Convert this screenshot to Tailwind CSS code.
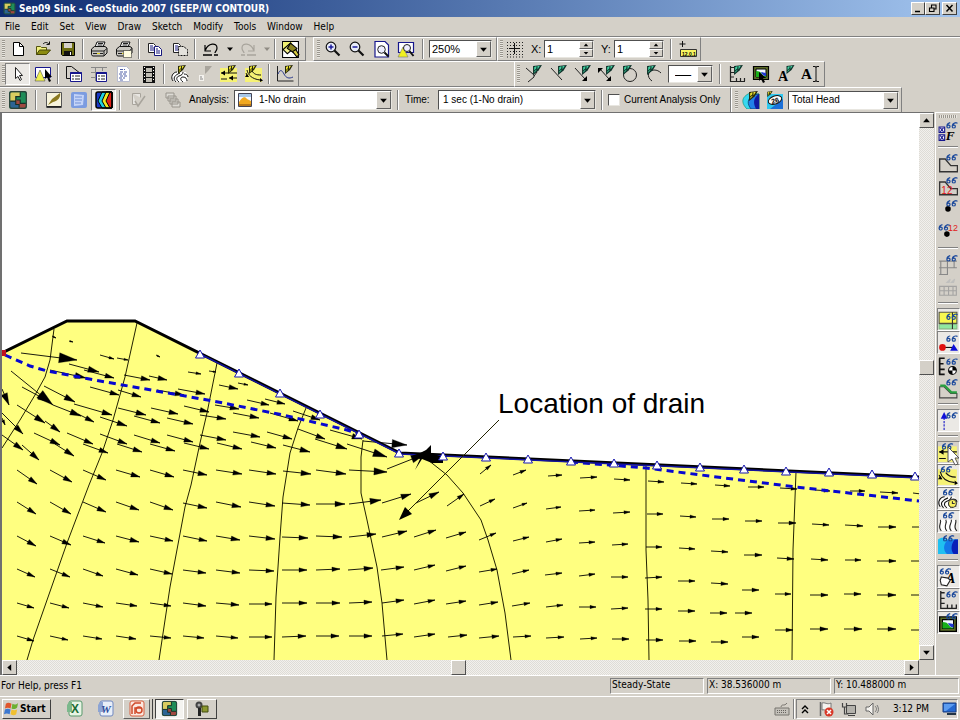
<!DOCTYPE html>
<html lang="en">
<head>
  <meta charset="UTF-8" />
  <meta name="viewport" content="width=device-width, initial-scale=1" />
  <title>Sep09 Sink - GeoStudio 2007 (SEEP/W CONTOUR)</title>
  <script src="https://cdn.jsdelivr.net/npm/@tailwindcss/browser@4"></script>
</head>
<body class="bg-[#d4d0c8] h-screen flex flex-col overflow-hidden text-black text-[10px] leading-3 font-['DejaVu_Sans_Condensed','DejaVu_Sans',sans-serif]">

  <!-- shared icons, 18x18 grid -->
  <svg class="hidden">
    <defs>
      <symbol id="logo" viewBox="0 0 18 18">
        <rect x="1" y="1" width="16" height="16" rx="2" fill="#1e6c50" />
        <path d="M2 2h9v4H7v4H2z" fill="#d8cc60" />
        <path d="M11 2h5v10h-5V9H8V6h3z" fill="#1e8c58" />
        <path d="M2 10h5v3h3v3H2z" fill="#2c6494" />
        <path d="M7 9h4v3h5v4h-6v-3H7z" fill="#a04840" />
        <path d="M11 2v4H7v4H2M8 9h3v3h5M7 10v3h3v3" fill="none" stroke="#163028" />
        <rect x="1.500" y="1.500" width="15" height="15" rx="2" fill="none" stroke="#2a4038" />
      </symbol>
      <symbol id="pen" viewBox="0 0 8 9">
        <path d="M0 1L8 0 5 5 0 9z" fill="#0c3028" />
        <path d="M1 2l2-1v2L1 5zM4 1h2L4 4zM1 6l2-2v1L1 7z" fill="#40d0a0" />
      </symbol>
      <symbol id="ypen" viewBox="0 0 8 9">
        <path d="M0 1L8 0 5 5 0 9z" fill="#282808" />
        <path d="M1 2l2-1v2L1 5zM4 1h2L4 4zM1 6l2-2v1L1 7z" fill="#e8e030" />
      </symbol>
      <symbol id="glasses" viewBox="0 0 11 6">
        <path d="M4 .5C2 1 1 2.500 1 4a1.300 1.300 0 0 0 2.800 0c0-1.500-2-1.600-2.600-.3M9 .5C7 1 5.800 2.500 5.800 4a1.300 1.300 0 0 0 2.800 0c0-1.500-2-1.600-2.600-.3M9 .6l1.600.5" fill="none" stroke="#1c4a9c" stroke-width="1.100" />
      </symbol>
      <symbol id="new" viewBox="0 0 18 18"><path d="M4.500 2.500h6l4 4v9h-10z" fill="#fff" stroke="#000" /><path d="M10.500 2.500v4h4" fill="none" stroke="#000" /></symbol>
      <symbol id="open" viewBox="0 0 18 18">
        <path d="M2.500 14.500v-8h4l1 1h5v3" fill="#f0f080" stroke="#555510" />
        <path d="M2.500 14.500l3-4.500h11l-4 4.500z" fill="#8c8c10" stroke="#444408" />
        <path d="M9 4c2-2 4-2 6 0M15.500 1.500v3h-3" fill="none" stroke="#111" />
      </symbol>
      <symbol id="save" viewBox="0 0 18 18">
        <path d="M2.500 2.500h13v13h-12l-1-1z" fill="#6c6c10" stroke="#000" />
        <path d="M5 3h8v5H5z" fill="#d4d0c8" /><path d="M5 11h8v4H5z" fill="#111" /><path d="M11 12h1v3h-1z" fill="#fff" />
      </symbol>
      <symbol id="print" viewBox="0 0 18 18">
        <path d="M5 7l2-5h8l-2 5z" fill="#fff" stroke="#111" />
        <path d="M1.500 9l3-2.500H15l2 1.500v5l-3 3H2.500l-1-1.500z" fill="#c8c6c0" stroke="#111" />
        <path d="M2 11h12l3-2.500M3 13.500h10M14 11v5M8 3.500h5M7.500 5h5" fill="none" stroke="#222" />
        <path d="M7 13h3v1H7z" fill="#e0d020" />
      </symbol>
      <symbol id="copy" viewBox="0 0 18 18">
        <path d="M2.500 3.500h5l2 2v7h-7z" fill="#fff" stroke="#222" />
        <path d="M8.500 6.500h4l3 3v6h-7z" fill="#fff" stroke="#16167c" />
        <path d="M4 6h3M4 8h4M4 10h4M10 9h2M10 11h4M10 13h4" stroke="#16167c" />
      </symbol>
      <symbol id="copydash" viewBox="0 0 18 18">
        <path d="M2.500 3.500h5l2 2v7h-7z" fill="#fff" stroke="#222" />
        <path d="M4 6h3M4 8h4M4 10h4" stroke="#16167c" />
        <path d="M7.500 6.500h5l4 3v6h-9z" fill="#e4e2dc" stroke="#111" stroke-dasharray="2 1" />
      </symbol>
      <symbol id="undo" viewBox="0 0 18 18"><path d="M3 5v6h6M3.500 10C6 3 15 2 15 8c0 3-2 3.500-2 5" fill="none" stroke="currentColor" stroke-width="1.200" /><path d="M1 15h9M12 15h4" stroke="currentColor" stroke-width="1.500" /></symbol>
      <symbol id="brush" viewBox="0 0 18 18">
        <path d="M1.500 1.500h15v15h-15z" fill="#fff" stroke="#000" />
        <path d="M2 2h9L2 11z" fill="#f0f070" />
        <path d="M2 9l7-6 3 5-6 5z" fill="#f4f090" stroke="#000" />
        <path d="M9 3l6 5-3 4-6-4z" fill="#8c8420" stroke="#000" />
        <path d="M11 11l3-2 3 5-2 2z" fill="#d8cc40" stroke="#000" />
      </symbol>
      <symbol id="mag" viewBox="0 0 18 18"><circle cx="7" cy="7" r="4.800" fill="#e8ecf8" stroke="#111" stroke-width="1.200" /><path d="M10.500 10.500l5 5" stroke="#111" stroke-width="2.200" /></symbol>
      <symbol id="pagemag" viewBox="0 0 18 18"><path d="M2 1.500h10l3.500 3.500v12H2z" fill="#fff" stroke="#16168c" stroke-width="1.200" /><circle cx="8.500" cy="9.500" r="3.800" fill="#eef" stroke="#222" /><path d="M11.500 12.500l4 4" stroke="#111" stroke-width="2" /></symbol>
      <symbol id="objmag" viewBox="0 0 18 18"><path d="M1.500 2.500h15v10h-15z" fill="#fff" stroke="#16168c" stroke-width="1.200" /><path d="M1 17l5-10 5 10z" fill="#f0f020" stroke="#777" stroke-width=".6" /><circle cx="10" cy="8" r="3.500" fill="#eef" stroke="#222" /><path d="M12.500 11l4 5" stroke="#111" stroke-width="2" /></symbol>
      <symbol id="gridpts" viewBox="0 0 18 18"><path d="M1 2.500h16M1 5.500h16M1 8.500h16M1 11.500h16M1 14.500h16M1 17h16" stroke="#222" stroke-dasharray="1 2" /><path d="M8.500 3v11M3 8.500h11" stroke="#111" /></symbol>
      <symbol id="coords" viewBox="0 0 18 18"><path d="M3.500 1v6M.5 4h6" stroke="#111" /><path d="M1.500 9.500h16v7h-16z" fill="#f8f460" stroke="#333" /><text x="3" y="15.500" font-size="5" font-weight="bold" font-family="Liberation Sans">12,0,1</text></symbol>
      <symbol id="pointer" viewBox="0 0 18 18"><path d="M6.500 2.500v11l2.500-2 2 4 1.500-1-2-4h3z" fill="#fff" stroke="#222" /></symbol>
      <symbol id="selobj" viewBox="0 0 18 18"><path d="M1.500 2.500h15v10h-15z" fill="#fff" stroke="#16168c" /><path d="M1 16l5-11 5 11z" fill="#f0f050" stroke="#555" stroke-width=".6" /><path d="M11 4v10l2-2 2 5 2-1-2-4h3z" fill="#000" /></symbol>
      <symbol id="regionprops" viewBox="0 0 18 18"><path d="M1.500 13.500v-12l5 0 9 7M1.500 13.500h5" fill="none" stroke="#111" /><path d="M5.500 7.500h11v9h-11z" fill="#fff" stroke="#16168c" /><path d="M5.500 8h11" stroke="#16168c" stroke-width="2" /><path d="M7 11h2M10 11h5M7 14h2M10 14h5" stroke="#222" /></symbol>
      <symbol id="meshprops" viewBox="0 0 18 18"><path d="M1 2.500h16M1 7.500h5M1 12.500h4M5.500 2v14M12.500 2v4" fill="none" stroke="#888" /><path d="M6.500 7.500h10v9h-10z" fill="#fff" stroke="#16168c" /><path d="M6.500 8h10" stroke="#16168c" stroke-width="2" /><path d="M8 11h2M11 11h4M8 14h2M11 14h4" stroke="#222" /></symbol>
      <symbol id="report" viewBox="0 0 18 18"><path d="M2.500 1.500h9l3 3v12h-12z" fill="#fff" stroke="#b8bcd0" /><path d="M5 4.500h5M5 7h7M4 9h7M5 11h7M4 13h6M5 15h4" stroke="#5060a8" stroke-dasharray="3 1" /></symbol>
      <symbol id="film" viewBox="0 0 18 18"><path d="M3 1h12v17H3z" fill="#111" /><path d="M6 3h6v4H6zM6 8h6v4H6zM6 13h6v4H6z" fill="#c0bdb4" /><path d="M4.500 2v15M13.500 2v15" stroke="#fff" stroke-dasharray="1 2" /></symbol>
      <symbol id="contours" viewBox="0 0 18 18"><path d="M2 15C-1 11 2 8 6 7l9 0 2 8-3 2H4z" fill="#fff" /><path d="M2 16C-1 12 2 7 6 7M5 17c-4-4-1-7 4-9M8 17c-3-2-3-5 0-6s4-2 4-4M12 17c-3-2-3-5 0-5s4 2 4 4M13 9c2 0 4 1 4 3" fill="none" stroke="#111" /></symbol>
      <symbol id="vectors" viewBox="0 0 18 18"><path d="M0 3h17v14H0z" fill="#f6f274" /><path d="M1 8h16M9 13h8M1 14h6" stroke="#111" /><path d="M1 8l4-2.500v5zM9 13l4-2.500v5z" fill="#000" /></symbol>
      <symbol id="paths" viewBox="0 0 18 18"><path d="M0 3h17v14H0z" fill="#f6f274" /><path d="M2 5c1 5 5 9 13 10M7 6c2 3 4 4 9 4M1 8l2 4" fill="none" stroke="#111" /><path d="M15 17v-4l3 2.500zM2 9l-2 3h4z" fill="#000" /></symbol>
      <symbol id="graph" viewBox="0 0 18 18"><path d="M1.500 1v15h16" fill="none" stroke="#222" /><path d="M2 9c2-5 4-4 6 0s5 5 9 3" fill="none" stroke="#28388c" /></symbol>
      <symbol id="ruler" viewBox="0 0 18 18"><path d="M2.500 1v15.500H17M2 2.500h4M2 7.500h4M2 12h4M8.500 16v-3M12.500 16v-3M16.500 16v-3" fill="none" stroke="#222" stroke-width="1.200" /></symbol>
      <symbol id="picture" viewBox="0 0 18 18"><path d="M1.500 1.500h15v13h-15z" fill="#5c6c28" stroke="#000" stroke-width="1.200" /><path d="M4 4h10v8H4z" fill="#f4f8ff" stroke="#000" /><path d="M4 6c3 0 5 1 6 3s2 2 4 2v1H4z" fill="#18b018" /><path d="M9 7l5 1v3c-2 0-4-1-5-4z" fill="#2038d0" /></symbol>
      <symbol id="mesh" viewBox="0 0 18 18"><path d="M1 4.500h16M1 10.500h16M1 16.500h8M2.500 4v13M8.500 4v13M14.500 4v7" stroke="currentColor" fill="none" /></symbol>
      <symbol id="region" viewBox="0 0 18 18"><path d="M1.500 4.500h5l5 6h6v5.500h-16z" fill="none" stroke="#333" stroke-width="1.200" /></symbol>
      <symbol id="contshade" viewBox="0 0 18 18"><path d="M0 4c3-2 5-2 7 0h11v13H0z" fill="#20c0f0" /><path d="M8 17c-4-4-3-9 1-13h9v13z" fill="#1478e8" /><path d="M14 17c-3-4-2-9 1-13h3v13z" fill="#0820b8" /></symbol>
      <symbol id="tri" viewBox="0 0 8 8"><path d="M1 2.500h6L4 6z" fill="currentColor" /></symbol>
    </defs>
  </svg>

  <header class="h-[17px] shrink-0 flex items-center gap-[3px] px-[3px] bg-linear-to-r from-[#0f2b70] to-[#a2c4ee] text-white font-bold">
    <svg class="size-[13px]"><use href="#logo" /></svg>
    <h1 class="grow">Sep09 Sink - GeoStudio 2007 (SEEP/W CONTOUR)</h1>
    <div class="flex text-black">
      <button aria-label="Minimize" class="w-[14px] h-[13px] bg-[#d4d0c8] border border-t-white border-l-white border-b-[#404040] border-r-[#404040]"><svg viewBox="0 0 12 11"><path d="M3 8.500h5" stroke="#000" stroke-width="1.500" /></svg></button>
      <button aria-label="Restore" class="w-[15px] h-[13px] bg-[#d4d0c8] border border-t-white border-l-white border-b-[#404040] border-r-[#404040]"><svg viewBox="0 0 13 11"><path d="M5.500 5V2h4.500v4H8M3.500 5h4.500v3.500H3.500zM5 2h5M3 5h5" fill="none" stroke="#000" stroke-width="1.100" /></svg></button>
      <button aria-label="Close" class="ml-[2px] w-[15px] h-[13px] bg-[#d4d0c8] border border-t-white border-l-white border-b-[#404040] border-r-[#404040]"><svg viewBox="0 0 13 11"><path d="M3.500 2l6 6.500M9.500 2l-6 6.500" stroke="#000" stroke-width="1.500" /></svg></button>
    </div>
  </header>

  <nav class="h-[19px] shrink-0 flex items-center gap-[11px] px-[5px]">
    <button>File</button><button>Edit</button><button>Set</button><button>View</button><button>Draw</button><button>Sketch</button><button>Modify</button><button>Tools</button><button>Window</button><button>Help</button>
  </nav>

  <!-- standard, zoom and grid bars -->
  <div class="h-[25px] shrink-0 flex items-stretch border-t border-[#808080] font-['Liberation_Sans',sans-serif]">
    <div class="flex items-center w-[306px] pl-[2px] border-t border-t-white border-r border-r-[#808080] border-b border-b-[#808080] *:shrink-0">
      <span class="w-[3px] h-[18px] bg-[repeating-linear-gradient(#9a968e_0_1px,#e8e6e0_1px_2px)]"></span>
      <button aria-label="New" class="w-[25px] flex justify-center"><svg class="size-[18px]"><use href="#new" /></svg></button>
      <button aria-label="Open" class="w-[25px] flex justify-center"><svg class="size-[18px]"><use href="#open" /></svg></button>
      <button aria-label="Save" class="w-[25px] flex justify-center"><svg class="size-[18px]"><use href="#save" /></svg></button>
      <span class="w-[2px] h-5 mx-[2px] border-l border-[#808080] bg-white"></span>
      <button aria-label="Print" class="w-[25px] flex justify-center"><svg class="size-[18px]"><use href="#print" /></svg></button>
      <button aria-label="Print selection" class="w-[25px] flex justify-center"><svg class="size-[18px]" viewBox="0 0 18 18"><use href="#print" width="18" height="18" /><path d="M8.500 10.500h8v7h-8z" fill="#fffde0" stroke="#222" stroke-dasharray="1 1" /></svg></button>
      <span class="w-[2px] h-5 mx-[2px] border-l border-[#808080] bg-white"></span>
      <button aria-label="Copy" class="w-[25px] flex justify-center"><svg class="size-[18px]"><use href="#copy" /></svg></button>
      <button aria-label="Copy selection" class="w-[25px] flex justify-center"><svg class="size-[18px]"><use href="#copydash" /></svg></button>
      <span class="w-[2px] h-5 mx-[2px] border-l border-[#808080] bg-white"></span>
      <button aria-label="Undo" class="w-[26px] flex justify-center"><svg class="size-[18px]"><use href="#undo" /></svg></button>
      <button aria-label="Undo list" class="w-[11px] flex justify-center"><svg class="size-[8px]"><use href="#tri" /></svg></button>
      <button aria-label="Redo" disabled class="w-[26px] flex justify-center text-[#a8a49c] -scale-x-100"><svg class="size-[18px]"><use href="#undo" /></svg></button>
      <button aria-label="Redo list" disabled class="w-[11px] flex justify-center text-[#908c84]"><svg class="size-[8px]"><use href="#tri" /></svg></button>
      <span class="w-[2px] h-5 mx-[2px] border-l border-[#808080] bg-white"></span>
      <button aria-label="Format painter" class="w-[25px] flex justify-center"><svg class="size-[19px]"><use href="#brush" /></svg></button>
    </div>
    <div class="flex items-center ml-[7px] w-[184px] pl-[3px] border-t border-l border-white border-r border-r-[#808080] border-b border-b-[#808080] *:shrink-0">
      <span class="w-[3px] h-[18px] bg-[repeating-linear-gradient(#9a968e_0_1px,#e8e6e0_1px_2px)]"></span>
      <button aria-label="Zoom in" class="w-[25px] flex justify-center"><svg class="size-[18px]" viewBox="0 0 18 18"><use href="#mag" width="18" height="18" /><path d="M4.500 7h5M7 4.500v5" stroke="#1c1c9c" stroke-width="1.500" /></svg></button>
      <button aria-label="Zoom out" class="w-6 flex justify-center"><svg class="size-[18px]" viewBox="0 0 18 18"><use href="#mag" width="18" height="18" /><path d="M4.500 7h5" stroke="#1c1c9c" stroke-width="1.500" /></svg></button>
      <button aria-label="Zoom page" class="w-[25px] flex justify-center"><svg class="size-[18px]"><use href="#pagemag" /></svg></button>
      <button aria-label="Zoom objects" class="w-6 flex justify-center"><svg class="size-[18px]"><use href="#objmag" /></svg></button>
      <span class="w-[2px] h-5 mx-[4px] border-l border-[#808080] bg-white"></span>
      <div class="relative w-[63px] h-[18px] ml-px bg-white border border-t-[#505050] border-l-[#505050] border-[#e8e6e0]">
        <select aria-label="Zoom" class="appearance-none size-full pl-[2px] text-[11px] leading-4"><option>250%</option></select>
        <span class="absolute right-0 inset-y-0 w-[15px] bg-[#d4d0c8] border border-t-white border-l-white border-[#606060] flex items-center justify-center pointer-events-none"><svg class="size-[9px]"><use href="#tri" /></svg></span>
      </div>
    </div>
    <div class="flex items-center w-[204px] pl-[2px] border-t border-l border-white border-r border-r-[#808080] border-b border-b-[#808080] *:shrink-0">
      <span class="w-[3px] h-[18px] bg-[repeating-linear-gradient(#9a968e_0_1px,#e8e6e0_1px_2px)]"></span>
      <button aria-label="Grid" class="w-6 flex justify-center"><svg class="size-[18px]"><use href="#gridpts" /></svg></button>
      <label for="gridX" class="w-[17px] pl-[4px] text-[11px]">X:</label>
      <div class="flex w-[50px] h-[18px] bg-white border border-t-[#505050] border-l-[#505050] border-[#e8e6e0]">
        <input id="gridX" value="1" class="w-[34px] pl-[2px] text-[11px]" />
        <span class="w-[14px] flex flex-col">
          <button aria-label="X up" class="flex-1 bg-[#d4d0c8] border border-t-white border-l-white border-[#606060] flex items-center justify-center"><svg class="size-[6px] rotate-180"><use href="#tri" /></svg></button>
          <button aria-label="X down" class="flex-1 bg-[#d4d0c8] border border-t-white border-l-white border-[#606060] flex items-center justify-center"><svg class="size-[6px]"><use href="#tri" /></svg></button>
        </span>
      </div>
      <label for="gridY" class="w-[20px] pl-[7px] text-[11px]">Y:</label>
      <div class="flex w-[50px] h-[18px] bg-white border border-t-[#505050] border-l-[#505050] border-[#e8e6e0]">
        <input id="gridY" value="1" class="w-[34px] pl-[2px] text-[11px]" />
        <span class="w-[14px] flex flex-col">
          <button aria-label="Y up" class="flex-1 bg-[#d4d0c8] border border-t-white border-l-white border-[#606060] flex items-center justify-center"><svg class="size-[6px] rotate-180"><use href="#tri" /></svg></button>
          <button aria-label="Y down" class="flex-1 bg-[#d4d0c8] border border-t-white border-l-white border-[#606060] flex items-center justify-center"><svg class="size-[6px]"><use href="#tri" /></svg></button>
        </span>
      </div>
      <span class="w-[2px] h-5 ml-[6px] mr-[4px] border-l border-[#808080] bg-white"></span>
      <button aria-label="Coordinates" class="w-6 flex justify-center"><svg class="size-[18px]"><use href="#coords" /></svg></button>
    </div>
    <div class="grow border-t border-white"></div>
  </div>

  <!-- mode and sketch bars -->
  <div class="h-[26px] shrink-0 flex items-stretch">
    <div class="flex items-center w-[299px] pl-[2px] border-t border-t-white border-r border-r-[#808080] border-b border-b-[#808080] *:shrink-0">
      <span class="w-[3px] h-[18px] bg-[repeating-linear-gradient(#9a968e_0_1px,#e8e6e0_1px_2px)]"></span>
      <button aria-label="Select" class="w-[25px] h-[22px] flex items-center justify-center bg-[#ebe9e5] border border-t-[#808080] border-l-[#808080] border-white"><svg class="size-[18px]"><use href="#pointer" /></svg></button>
      <button aria-label="Select objects" class="w-[25px] flex justify-center"><svg class="size-[18px]"><use href="#selobj" /></svg></button>
      <span class="w-[2px] h-5 mx-[2px] border-l border-[#808080] bg-white"></span>
      <button aria-label="Region properties" class="w-[25px] flex justify-center"><svg class="size-[18px]"><use href="#regionprops" /></svg></button>
      <button aria-label="Mesh properties" class="w-[25px] flex justify-center"><svg class="size-[18px]"><use href="#meshprops" /></svg></button>
      <button aria-label="Report" class="w-[25px] flex justify-center"><svg class="size-[18px]"><use href="#report" /></svg></button>
      <button aria-label="Movie" class="w-[25px] flex justify-center"><svg class="size-[18px]"><use href="#film" /></svg></button>
      <span class="w-[2px] h-5 mx-[2px] border-l border-[#808080] bg-white"></span>
      <button aria-label="Draw contours" class="w-[25px] flex justify-center"><svg class="size-[18px]" viewBox="0 0 18 18"><use href="#contours" width="18" height="18" /><use href="#ypen" x="7" width="8" height="9" /></svg></button>
      <button aria-label="Draw contour labels" disabled class="w-[25px] flex justify-center"><svg class="size-[18px]" viewBox="0 0 18 18"><path d="M9 1h7l-4 5-3 3z" fill="#a8a49c" /><path d="M3 10h5v6H3z" fill="#f4f2ee" /><path d="M4 12h2M4 14h3" stroke="#888" /></svg></button>
      <button aria-label="Draw vectors" class="w-6 flex justify-center"><svg class="size-[18px]" viewBox="0 0 18 18"><use href="#vectors" width="18" height="18" /><use href="#ypen" x="8" width="8" height="9" /></svg></button>
      <button aria-label="Draw flow paths" class="w-[25px] flex justify-center"><svg class="size-[18px]" viewBox="0 0 18 18"><use href="#paths" width="18" height="18" /><use href="#ypen" x="4" width="8" height="9" /></svg></button>
      <span class="w-[2px] h-5 mx-[2px] border-l border-[#808080] bg-white"></span>
      <button aria-label="Draw graph" class="w-[25px] flex justify-center"><svg class="size-[18px]" viewBox="0 0 18 18"><use href="#graph" width="18" height="18" /><use href="#ypen" x="9" width="8" height="9" /></svg></button>
    </div>
    <div class="w-[215px] border-t border-white border-b border-b-[#808080]"></div>
    <div class="flex items-center w-[311px] pl-[2px] border-t border-l border-white border-r border-r-[#808080] border-b border-b-[#808080] *:shrink-0">
      <span class="w-[3px] h-[18px] bg-[repeating-linear-gradient(#9a968e_0_1px,#e8e6e0_1px_2px)]"></span>
      <button aria-label="Sketch lines" class="w-6 ml-[2px] flex justify-center"><svg class="size-[18px]" viewBox="0 0 18 18"><path d="M1 3l8 7v2l-6 5M9 11l3-4" fill="none" stroke="#222" /><use href="#pen" x="8" width="9" height="10" /></svg></button>
      <button aria-label="Sketch line" class="w-6 flex justify-center"><svg class="size-[18px]" viewBox="0 0 18 18"><path d="M2 3l11 12" stroke="#222" /><use href="#pen" x="9" width="9" height="10" /></svg></button>
      <button aria-label="Sketch arrow" class="w-6 flex justify-center"><svg class="size-[18px]" viewBox="0 0 18 18"><path d="M2 3l10 11" stroke="#222" /><path d="M14 11v5H9z" fill="#000" /><use href="#pen" x="9" width="9" height="10" /></svg></button>
      <button aria-label="Sketch double arrow" class="w-6 flex justify-center"><svg class="size-[18px]" viewBox="0 0 18 18"><path d="M3 4l9 10" stroke="#222" /><path d="M14 11v5H9zM1 3h5L1 8z" fill="#000" /><use href="#pen" x="9" width="9" height="10" /></svg></button>
      <button aria-label="Sketch circle" class="w-6 flex justify-center"><svg class="size-[18px]" viewBox="0 0 18 18"><circle cx="9" cy="10" r="6.500" fill="none" stroke="#222" /><use href="#pen" x="2" width="9" height="10" /></svg></button>
      <button aria-label="Sketch arc" class="w-6 flex justify-center"><svg class="size-[18px]" viewBox="0 0 18 18"><path d="M7 16c-6-4-4-11 2-11 3 0 5 1 7 3" fill="none" stroke="#222" /><use href="#pen" x="2" width="9" height="10" /></svg></button>
      <div class="relative w-[45px] h-[18px] ml-[2px] bg-white border border-t-[#505050] border-l-[#505050] border-[#e8e6e0]">
        <select aria-label="Line style" class="appearance-none size-full pl-[6px] text-[16px] leading-4 font-['Liberation_Serif',serif]"><option>—</option></select>
        <span class="absolute right-0 inset-y-0 w-[15px] bg-[#d4d0c8] border border-t-white border-l-white border-[#606060] flex items-center justify-center pointer-events-none"><svg class="size-[9px]"><use href="#tri" /></svg></span>
      </div>
      <span class="w-[2px] h-5 ml-[6px] mr-[4px] border-l border-[#808080] bg-white"></span>
      <button aria-label="Sketch axes" class="w-6 flex justify-center"><svg class="size-[18px]" viewBox="0 0 18 18"><use href="#ruler" width="18" height="18" /><use href="#pen" x="6" width="9" height="10" /></svg></button>
      <button aria-label="Insert picture" class="w-6 flex justify-center"><svg class="size-[18px]" viewBox="0 0 18 18"><use href="#picture" width="18" height="18" /><path d="M7 7v9l2-2 2 4 2-1-2-4h3z" /></svg></button>
      <button aria-label="Sketch text" class="w-[25px] flex justify-center"><svg class="size-[18px]" viewBox="0 0 18 18"><text x="1" y="16" font-size="14" font-weight="bold" font-family="Liberation Serif">A</text><use href="#pen" x="9" width="9" height="9" /></svg></button>
      <button aria-label="Modify text" class="w-6 flex justify-center"><svg class="size-[18px]" viewBox="0 0 18 18"><text x="0" y="14" font-size="15" font-weight="bold" font-family="Liberation Serif">A</text><path d="M12 1.500h2.500l.5 1 .5-1H18M15 2v14M12 16.500h2.500l.5-1 .5 1H18" fill="none" stroke="#111" /></svg></button>
    </div>
  </div>

  <!-- analysis bar -->
  <div class="h-[25px] shrink-0 flex items-stretch font-['Liberation_Sans',sans-serif]">
    <div class="flex items-center w-[731px] pl-[2px] border-t border-t-white border-r border-r-[#808080] *:shrink-0">
      <span class="w-[3px] h-[18px] bg-[repeating-linear-gradient(#9a968e_0_1px,#e8e6e0_1px_2px)]"></span>
      <button aria-label="Define" class="w-[26px] flex justify-center"><svg class="size-[20px]"><use href="#logo" /></svg></button>
      <span class="w-[2px] h-5 mx-[4px] border-l border-[#808080] bg-white"></span>
      <button aria-label="Define view" class="w-[25px] flex justify-center"><svg class="size-[18px]" viewBox="0 0 18 18"><path d="M1.500 1.500h15v15h-15z" fill="#f8f4dc" stroke="#555" /><path d="M3 14l4-6 8-6c1 4-2 8-7 9z" fill="#8c7a20" /><path d="M2 15h14v1.500H2z" fill="#222" /></svg></button>
      <button aria-label="Solve" class="w-[25px] flex justify-center"><svg class="size-[18px]" viewBox="0 0 18 18"><rect x="1" y="1" width="16" height="16" rx="2" fill="#7c9ce0" /><path d="M4 3l10 1-1 10-9 1z" fill="#c4d4f8" /><path d="M5 6h7M5 9h7M5 12h6" stroke="#7090d8" /></svg></button>
      <button aria-label="Contour view" class="w-[25px] h-[22px] flex items-center justify-center bg-[#ebe9e5] border border-t-[#808080] border-l-[#808080] border-white"><svg class="size-[18px]" viewBox="0 0 18 18"><rect x="1" y="1" width="16" height="16" rx="2" fill="#1838c8" /><path d="M7 1h10v16H7L3 10z" fill="#20d0e0" stroke="#000" /><path d="M11 1h6v16h-6l-4-7z" fill="#f0e820" stroke="#000" /><path d="M15 1h2v16h-2l-4-7z" fill="#e02018" stroke="#000" /><rect x="1" y="1" width="16" height="16" rx="2" fill="none" stroke="#000" stroke-width="1.500" /></svg></button>
      <span class="w-[2px] h-5 mx-[3px] border-l border-[#808080] bg-white"></span>
      <button aria-label="Verify" disabled class="w-[27px] flex justify-center"><svg class="size-[18px]" viewBox="0 0 18 18"><path d="M3.500 2.500h8v4M3.500 2.500v11h4" fill="#e8e6e2" stroke="#a8a49c" /><path d="M6 10l3 5 7-10" fill="none" stroke="#a8a49c" stroke-width="1.500" /></svg></button>
      <span class="w-[2px] h-5 mx-[3px] border-l border-[#808080] bg-white"></span>
      <button aria-label="Analyses" disabled class="w-[27px] flex justify-center"><svg class="size-[18px]" viewBox="0 0 18 18"><path d="M2 2h8v5H2zM4 5h8v5H4zM6 8h8v5H6zM8 11h8v5H8z" fill="#dcdad4" stroke="#98948c" /></svg></button>
      <label for="analysis" class="w-[48px] pl-[3px]">Analysis:</label>
      <div class="relative w-[158px] h-[20px] flex items-center bg-white border border-t-[#505050] border-l-[#505050] border-[#e8e6e0]">
        <svg class="size-4 ml-[2px]" viewBox="0 0 16 16"><path d="M1.500 1.500h13v13h-13z" fill="#f4f8ff" stroke="#445" /><path d="M2 10c3-5 6-6 8-3l4 2v5H2z" fill="#f0a820" /><path d="M2 12h12v2H2z" fill="#b87818" /><path d="M2 2h12v3H2z" fill="#a8c8e8" /></svg>
        <select id="analysis" class="appearance-none grow h-full pl-[6px]"><option>1-No drain</option></select>
        <span class="absolute right-0 inset-y-0 w-[15px] bg-[#d4d0c8] border border-t-white border-l-white border-[#606060] flex items-center justify-center pointer-events-none"><svg class="size-[9px]"><use href="#tri" /></svg></span>
      </div>
      <span class="w-[2px] h-5 mx-[5px] border-l border-[#808080] bg-white"></span>
      <label for="time" class="w-[34px] pl-px">Time:</label>
      <div class="relative w-[158px] h-[20px] bg-white border border-t-[#505050] border-l-[#505050] border-[#e8e6e0]">
        <select id="time" class="appearance-none size-full pl-[4px]"><option>1 sec (1-No drain)</option></select>
        <span class="absolute right-0 inset-y-0 w-[15px] bg-[#d4d0c8] border border-t-white border-l-white border-[#606060] flex items-center justify-center pointer-events-none"><svg class="size-[9px]"><use href="#tri" /></svg></span>
      </div>
      <span class="w-[2px] h-5 mx-[5px] border-l border-[#808080] bg-white"></span>
      <input type="checkbox" id="current" class="appearance-none size-3 bg-white border border-t-[#505050] border-l-[#505050] border-[#e8e6e0]" />
      <label for="current" class="pl-[4px]">Current Analysis Only</label>
    </div>
    <div class="flex items-center w-[171px] pl-[3px] border-t border-l border-white border-r border-r-[#808080] *:shrink-0">
      <span class="w-[3px] h-[18px] bg-[repeating-linear-gradient(#9a968e_0_1px,#e8e6e0_1px_2px)]"></span>
      <button aria-label="Draw shading" class="w-[25px] flex justify-center"><svg class="size-[18px]" viewBox="0 0 18 18"><path d="M8 2C-1 6-1 12 5 18h12V3z" fill="#38d8f0" stroke="#086" stroke-width=".6" /><path d="M11 4c-6 4-6 9-2 14h8V3z" fill="#2080e8" stroke="#024" stroke-width=".6" /><path d="M17 3c-6 4-6 9-3 15h3z" fill="#1018a0" /><use href="#ypen" x="7" width="9" height="10" /></svg></button>
      <button aria-label="Label contours" class="w-6 flex justify-center"><svg class="size-[18px]" viewBox="0 0 18 18"><path d="M1 3h16v15H1z" fill="#30c8f0" /><path d="M17 8v10H4z" fill="#1c70d8" /><ellipse cx="9" cy="9" rx="7" ry="4" transform="rotate(-20 9 9)" fill="#fff" stroke="#111" /><text x="5" y="12" font-size="7" font-weight="bold" font-family="Liberation Sans" transform="rotate(-15 9 9)">26</text><use href="#ypen" x="1" width="6" height="6" /></svg></button>
      <div class="relative w-[111px] h-[19px] ml-[1px] bg-white border border-t-[#505050] border-l-[#505050] border-[#e8e6e0]">
        <select aria-label="Contour parameter" class="appearance-none size-full pl-[3px]"><option>Total Head</option></select>
        <span class="absolute right-0 inset-y-0 w-[15px] bg-[#d4d0c8] border border-t-white border-l-white border-[#606060] flex items-center justify-center pointer-events-none"><svg class="size-[9px]"><use href="#tri" /></svg></span>
      </div>
    </div>
  </div>

  <div class="grow min-h-0 flex">
    <main class="grow min-w-0 flex flex-col border-t border-l-2 border-[#707070]">
      <div class="grow min-h-0 flex">
        <svg id="drawing" class="grow min-w-0 h-full bg-white" viewBox="2 113 917 547" preserveAspectRatio="xMinYMin slice">
          <path d="M2 353L67 321H135L400 453L919 477V660H2z" fill="#ffff80" />
          <g fill="none" stroke="#222200">
            <path d="M54 329L50 360L45 377L35 395L20 420L2 448" />
            <path d="M137 323L125 377L113 420L102 453L89 485L67 543L33 640L27 660" />
            <path d="M217 363L207 413L200 443L191 485L185 507L170 587L159 660" />
            <path d="M306 408L298 428L290 453L283 497L280 537L276 597L274 660" />
            <path d="M363 440L361 457V493L367 520L377 567L382 603L387 660" />
            <path d="M428 460L447 475L463 493L481 520L488 540L497 570L505 613L511 660" />
            <path d="M646 465V550L648 600L649 660" />
            <path d="M796 472L793 550L792 660" />
          </g>
          <g id="arrows" stroke="#000" fill="#000"></g>
          <path d="M5 355L30 366L47 371L100 381L213 401L283 415L347 430L360 434M571 462L646 468L796 487L919 501" fill="none" stroke="#0808d0" stroke-width="3" stroke-dasharray="7 5" />
          <path d="M2 353L67 321H135L400 453L919 477" fill="none" stroke="#000" stroke-width="3" />
          <path d="M200 354L400 454L919 478" fill="none" stroke="#1414a0" stroke-width="1.500" />
          <path d="M411 456L420 453L426 450L431 445V453L443 457V463H432L422 459L415 470L420 459z" />
          <path d="M499 420L404 515" stroke="#222200" />
          <path d="M399 520L405 507L412 514z" />
          <rect x="2" y="350" width="4" height="6" fill="#c01020" />
          <g id="seepage" fill="#fff" stroke="#1818b0"></g>
          <text x="498" y="413" font-size="28" font-family="Liberation Sans, sans-serif">Location of drain</text>
        </svg>
        <div class="w-[15px] shrink-0 flex flex-col bg-[repeating-conic-gradient(#f2f0ed_0_25%,#dedcd6_0_50%)] bg-size-[2px_2px]">
          <button aria-label="Scroll up" class="h-[15px] bg-[#d4d0c8] border border-t-white border-l-white border-[#505050] flex items-center justify-center"><svg class="size-[9px] rotate-180"><use href="#tri" /></svg></button>
          <div class="grow-[232]"></div>
          <div class="h-[15px] bg-[#d4d0c8] border border-t-white border-l-white border-[#505050]"></div>
          <div class="grow-[270]"></div>
          <button aria-label="Scroll down" class="h-[15px] bg-[#d4d0c8] border border-t-white border-l-white border-[#505050] flex items-center justify-center"><svg class="size-[9px]"><use href="#tri" /></svg></button>
        </div>
      </div>
      <div class="h-[15px] shrink-0 mr-[15px] flex bg-[repeating-conic-gradient(#f2f0ed_0_25%,#dedcd6_0_50%)] bg-size-[2px_2px]">
        <button aria-label="Scroll left" class="w-[15px] bg-[#d4d0c8] border border-t-white border-l-white border-[#505050] flex items-center justify-center"><svg class="size-[9px] rotate-90"><use href="#tri" /></svg></button>
        <div class="grow-[434]"></div>
        <div class="w-[15px] bg-[#d4d0c8] border border-t-white border-l-white border-[#505050]"></div>
        <div class="grow-[438]"></div>
        <button aria-label="Scroll right" class="w-[15px] bg-[#d4d0c8] border border-t-white border-l-white border-[#505050] flex items-center justify-center"><svg class="size-[9px] -rotate-90"><use href="#tri" /></svg></button>
      </div>
    </main>

    <!-- view toggles -->
    <aside class="w-[25px] ml-px shrink-0 flex flex-col items-center border-t border-l border-white *:shrink-0">
      <span class="w-[18px] h-[3px] my-[2px] bg-[repeating-linear-gradient(90deg,#9a968e_0_1px,#e8e6e0_1px_2px)]"></span>
      <button aria-label="View preferences" class="h-[23px] w-[23px] flex items-center justify-center"><svg class="size-[20px]" viewBox="0 0 18 18"><path d="M1 4.500h5v5H1zM1 11.500h5v5H1z" fill="#fff" stroke="#16168c" /><path d="M2 5l3 4M5 5L2 9M2 12l3 4M5 12l-3 4" stroke="#16168c" /><text x="7" y="16" font-size="12" font-style="italic" font-weight="bold" font-family="Liberation Serif">F</text><use href="#glasses" x="7" y="0" width="11" height="6" /></svg></button>
      <span class="w-5 h-[2px] mt-[3px] mb-[4px] border-t border-[#808080] bg-white"></span>
      <button aria-label="Regions" class="h-[23px] w-[23px] flex items-center justify-center"><svg class="size-[20px]" viewBox="0 0 18 18"><use href="#region" width="18" height="18" /><use href="#glasses" x="7" y="0" width="11" height="6" /></svg></button>
      <button aria-label="Region numbers" class="h-[23px] w-[23px] flex items-center justify-center"><svg class="size-[20px]" viewBox="0 0 18 18"><use href="#region" width="18" height="18" /><text x="3" y="15" font-size="9" fill="#e02020" font-family="Liberation Sans">12</text><use href="#glasses" x="7" y="0" width="11" height="6" /></svg></button>
      <button aria-label="Points" class="h-[23px] w-[23px] flex items-center justify-center"><svg class="size-[20px]" viewBox="0 0 18 18"><circle cx="9" cy="8" r="2.500" /><use href="#glasses" x="7" y="0" width="11" height="6" /></svg></button>
      <button aria-label="Point numbers" class="h-[23px] w-[23px] flex items-center justify-center"><svg class="size-[20px]" viewBox="0 0 18 18"><circle cx="8" cy="10" r="2.500" /><text x="9" y="7" font-size="8" fill="#e02020" font-family="Liberation Sans">12</text><use href="#glasses" x="0" y="1" width="11" height="6" /></svg></button>
      <span class="w-5 h-[2px] mt-[3px] mb-[4px] border-t border-[#808080] bg-white"></span>
      <button aria-label="Mesh" class="h-[23px] w-[23px] flex items-center justify-center text-[#888]"><svg class="size-[20px]" viewBox="0 0 18 18"><use href="#mesh" y="1" width="18" height="18" /><use href="#glasses" x="7" y="0" width="11" height="6" /></svg></button>
      <button aria-label="Surface mesh" disabled class="h-[23px] w-[23px] flex items-center justify-center text-[#999]"><svg class="size-[20px] opacity-80" viewBox="0 0 18 18"><path d="M1 7.500h16M1 11.500h16M1 15.500h16M1.500 7v9M5.500 7v9M9.500 7v9M13.500 7v9M16.500 7v9" stroke="currentColor" /><path d="M11 1l-3 3h2zM15 1l-3 3h2z" stroke="#bbb" fill="none" /></svg></button>
      <span class="w-5 h-[2px] mt-[3px] mb-[4px] border-t border-[#808080] bg-white"></span>
      <button aria-label="Materials" class="h-[23px] w-[23px] flex items-center justify-center bg-[#ebe9e5] border border-t-[#808080] border-l-[#808080] border-white"><svg class="size-[20px]" viewBox="0 0 18 18"><path d="M1 2h16v10H1z" fill="#f8f850" stroke="#554" /><path d="M1 13h16v4H1z" fill="#90e8a0" stroke="#8b8" /><path d="M13 2v15" stroke="#333" /><use href="#glasses" x="7" y="3" width="11" height="6" /></svg></button>
      <button aria-label="Boundary conditions" class="h-[23px] w-[23px] flex items-center justify-center bg-[#ebe9e5] border border-t-[#808080] border-l-[#808080] border-white"><svg class="size-[20px]" viewBox="0 0 18 18"><path d="M4 13h10" stroke="#111" /><circle cx="4" cy="13" r="3" fill="#e01010" /><path d="M11 16l3-6 4 6z" fill="#1010d8" /><use href="#glasses" x="7" y="2" width="11" height="6" /></svg></button>
      <button aria-label="Functions" class="h-[23px] w-[23px] flex items-center justify-center"><svg class="size-[20px]" viewBox="0 0 18 18"><path d="M1.500 2v15M1 2h5M1 7h4M1 12h5M1 16.500h5" stroke="#111" stroke-width="1.500" /><circle cx="13" cy="13" r="3.500" fill="#fff" stroke="#111" /><path d="M13 9.500v3.500h3.500A3.500 3.500 0 0 0 13 9.500zM13 16.500V13H9.500a3.500 3.500 0 0 0 3.500 3.500z" /><use href="#glasses" x="7" y="2" width="11" height="6" /></svg></button>
      <button aria-label="Surface layers" class="h-[23px] w-[23px] flex items-center justify-center"><svg class="size-[20px]" viewBox="0 0 18 18"><path d="M1.500 16V7h4l6 6h5.500v4H1.500z" fill="#d4d0c8" stroke="#444" /><path d="M2 6h4l6 6h5" fill="none" stroke="#28a040" stroke-width="2" /><use href="#glasses" x="7" y="0" width="11" height="6" /></svg></button>
      <span class="w-5 h-[2px] mt-[3px] mb-[4px] border-t border-[#808080] bg-white"></span>
      <button aria-label="Initial water table" class="h-[23px] w-[23px] flex items-center justify-center bg-[#ebe9e5] border border-t-[#808080] border-l-[#808080] border-white"><svg class="size-[20px]" viewBox="0 0 18 18"><path d="M5.500 6v11" stroke="#1818c8" stroke-dasharray="2 1" /><path d="M2.500 7l3-6 3 6z" fill="#1010d8" /><use href="#glasses" x="7" y="1" width="11" height="6" /></svg></button>
      <span class="w-5 h-[2px] mt-[3px] mb-[4px] border-t border-[#808080] bg-white"></span>
      <button aria-label="Flux vectors" class="relative h-[23px] w-[23px] flex items-center justify-center border border-t-[#808080] border-l-[#808080] border-white"><svg class="size-[20px]" viewBox="0 0 18 18"><use href="#vectors" width="18" height="18" /><use href="#glasses" x="3" y="0" width="11" height="6" /></svg>
        <svg class="absolute left-[8px] top-[4px] w-[14px] h-[21px] z-10 pointer-events-none" viewBox="0 0 14 21"><path d="M2 1v15l4-3 3 6 3-1-3-6h4z" fill="#fff" stroke="#555" /></svg>
      </button>
      <button aria-label="Flow paths" class="h-[23px] w-[23px] flex items-center justify-center bg-[#ebe9e5] border border-t-[#808080] border-l-[#808080] border-white"><svg class="size-[20px]" viewBox="0 0 18 18"><use href="#paths" width="18" height="18" /><use href="#glasses" x="2" y="0" width="11" height="6" /></svg></button>
      <button aria-label="Contour labels" class="h-[23px] w-[23px] flex items-center justify-center bg-[#ebe9e5] border border-t-[#808080] border-l-[#808080] border-white"><svg class="size-[20px]" viewBox="0 0 18 18"><use href="#contours" width="18" height="18" /><circle cx="13" cy="13" r="3.500" fill="#f8f060" stroke="#333" /><path d="M13 11v2h2" fill="none" stroke="#333" /><use href="#glasses" x="4" y="0" width="11" height="6" /></svg></button>
      <button aria-label="Contours" class="h-[23px] w-[23px] flex items-center justify-center bg-[#ebe9e5] border border-t-[#808080] border-l-[#808080] border-white"><svg class="size-[20px]" viewBox="0 0 18 18"><path d="M3 17C-1 13 4 9 2 7h14v3c-2 3-2 5 0 7z" fill="#fff" /><path d="M3 17C-1 13 4 9 2 7M8 17c-4-4 1-7-1-10M12 17c-4-4 1-7 0-10M17 17c-4-4 0-6-1-10" fill="none" stroke="#222" /><use href="#glasses" x="4" y="0" width="11" height="6" /></svg></button>
      <button aria-label="Contour shading" class="h-[23px] w-[23px] flex items-center justify-center"><svg class="size-[20px]" viewBox="0 0 18 18"><use href="#contshade" width="18" height="18" /><use href="#glasses" x="4" y="0" width="11" height="6" /></svg></button>
      <span class="w-5 h-[2px] mt-[3px] mb-[4px] border-t border-[#808080] bg-white"></span>
      <button aria-label="Sketch objects" class="h-[23px] w-[23px] flex items-center justify-center bg-[#ebe9e5] border border-t-[#808080] border-l-[#808080] border-white"><svg class="size-[20px]" viewBox="0 0 18 18"><text x="7" y="14" font-size="13" font-weight="bold" font-style="italic" font-family="Liberation Serif">A</text><path d="M3 9l6 1 2 2-3 5-5-1-1-4z" fill="#fff" stroke="#222" /><use href="#glasses" x="1" y="1" width="11" height="6" /></svg></button>
      <button aria-label="Axes" class="h-[23px] w-[23px] flex items-center justify-center bg-[#dedbd5] border border-t-[#808080] border-l-[#808080] border-white"><svg class="size-[20px]" viewBox="0 0 18 18"><use href="#ruler" width="18" height="18" /><use href="#glasses" x="7" y="1" width="11" height="6" /></svg></button>
      <button aria-label="Pictures" class="h-[23px] w-[23px] flex items-center justify-center bg-[#ebe9e5] border border-t-[#808080] border-l-[#808080] border-white"><svg class="size-[20px]" viewBox="0 0 18 18"><use href="#picture" y="2" width="18" height="18" /><use href="#glasses" x="7" y="0" width="11" height="6" /></svg></button>
    </aside>
  </div>

  <footer class="h-[21px] shrink-0 flex items-center gap-[3px] px-px border-t border-white">
    <span class="grow">For Help, press F1</span>
    <span class="w-[94px] h-4 pl-px border border-t-[#808080] border-l-[#808080] border-white">Steady-State</span>
    <span class="w-[124px] h-4 pl-px border border-t-[#808080] border-l-[#808080] border-white">X: 38.536000 m</span>
    <span class="w-[125px] h-4 pl-px border border-t-[#808080] border-l-[#808080] border-white">Y: 10.488000 m</span>
  </footer>

  <div class="h-6 shrink-0 flex items-center pl-[2px] pr-[2px] border-t border-white *:shrink-0">
    <button class="w-[49px] h-5 flex items-center gap-px pl-px border border-t-white border-l-white border-[#404040] font-bold">
      <svg class="size-[15px]" viewBox="0 0 16 16"><path d="M2 3c2-2 4-1 6 0L7 8C5 7 3 7 1 8z" fill="#e0562c" /><path d="M9 3c2 1 4 1 6-1l-1 5c-2 2-4 2-6 1z" fill="#6cb030" /><path d="M1 9c2-1 4-1 6 0l-1 5c-2-1-4-1-6 0z" fill="#3c78d0" /><path d="M8 9c2 1 4 1 6 0l-1 5c-2 2-4 1-6 0z" fill="#f0c030" /></svg>
      Start
    </button>
    <button aria-label="Excel" class="w-[30px] ml-[8px] flex justify-center"><svg class="size-[17px]" viewBox="0 0 17 17"><rect x="3" y="1" width="13" height="15" rx="2" fill="#e8f4e4" stroke="#58986c" /><path d="M1 5l2-3h3v10H1z" fill="#7cb88c" /><text x="5" y="13" font-size="12" font-weight="bold" fill="#1c6c34" font-family="Liberation Sans">X</text></svg></button>
    <button aria-label="Word" class="w-[32px] flex justify-center"><svg class="size-[17px]" viewBox="0 0 17 17"><rect x="3" y="1" width="13" height="15" rx="2" fill="#e8eef8" stroke="#7088c0" /><path d="M1 5l2-3h3v10H1z" fill="#8ca4d4" /><text x="4" y="13" font-size="11" font-weight="bold" font-style="italic" fill="#2c4c9c" font-family="Liberation Serif">W</text></svg></button>
    <button aria-label="PowerPoint" class="w-[27px] h-5 ml-[2px] flex items-center justify-center border border-t-white border-l-white border-[#606060]"><svg class="size-[17px]" viewBox="0 0 17 17"><rect x="2" y="1" width="14" height="15" rx="2" fill="#fbe8e0" stroke="#d86040" /><path d="M4 14V6l3-3h6M7 14V8h6" fill="none" stroke="#d04828" stroke-width="1.500" /><circle cx="11" cy="10" r="3" fill="none" stroke="#d04828" stroke-width="1.500" /></svg></button>
    <span class="w-[3px] h-5 border-r border-[#404040]"></span>
    <button aria-label="GeoStudio" class="w-[29px] h-5 ml-[2px] flex items-center justify-center bg-[#f4f3f0] border border-t-[#404040] border-l-[#404040] border-white"><svg class="size-[17px]"><use href="#logo" /></svg></button>
    <button aria-label="Recorder" class="w-[30px] h-5 ml-[3px] flex items-center justify-center border border-t-white border-l-white border-[#404040]"><svg class="size-4" viewBox="0 0 16 16"><circle cx="5" cy="4" r="3.500" fill="#444" /><circle cx="5" cy="4" r="1.500" fill="#aaa" /><path d="M4 7h3v8H4z" fill="#222" /><path d="M8 5h6v6H8z" fill="#8c9830" stroke="#444c10" /></svg></button>
    <span class="grow"></span>
    <button aria-label="Keyboard" class="w-4 mr-[3px]"><svg class="size-4" viewBox="0 0 16 16"><path d="M1 7h14v7H1z" fill="#c4c1ba" stroke="#77746e" /><path d="M3 9.500h10M3 11.500h10" stroke="#66635e" stroke-dasharray="1 1" /><path d="M7 6c1-4 3 0 6-4" fill="none" stroke="#77746e" /></svg></button>
    <span class="w-[2px] h-5 border-l border-[#808080] bg-white"></span>
    <div class="w-[162px] h-5 ml-px flex items-center border border-t-[#808080] border-l-[#808080] border-white">
      <button aria-label="Show hidden icons" class="w-[15px] flex justify-center"><svg class="size-[10px]" viewBox="0 0 10 10"><path d="M2 5l3-3 3 3M2 9l3-3 3 3" fill="none" stroke="#000" stroke-width="1.400" /></svg></button>
      <button aria-label="Action center" class="ml-[6px]"><svg class="size-4" viewBox="0 0 16 16"><path d="M2.500 1v14" stroke="#666" stroke-width="1.500" /><path d="M4 2c3-1 5 2 9 0v7c-4 2-6-1-9 0z" fill="#f4f2ee" stroke="#777" /><circle cx="11" cy="11" r="4.500" fill="#d83828" /><path d="M9 9l4 4M13 9l-4 4" stroke="#fff" stroke-width="1.500" /></svg></button>
      <button aria-label="Network" class="ml-[7px]"><svg class="size-4" viewBox="0 0 16 16"><path d="M5.500 4.500h9v8h-9z" fill="#b4b2ac" stroke="#444" /><path d="M1.500 2v4h4V2M3.500 6v7h4M7 14.500h7" fill="none" stroke="#444" stroke-width="1.200" /></svg></button>
      <button aria-label="Volume" class="ml-[7px]"><svg class="size-4" viewBox="0 0 16 16"><path d="M2 6h3l4-4v12l-4-4H2z" fill="#f4f2ee" stroke="#666" /><path d="M11 5c2 2 2 4 0 6M13 4c2 3 2 6 0 8" fill="none" stroke="#777" /></svg></button>
      <span class="grow text-center">3:12 PM</span>
      <button aria-label="Show desktop"><svg class="size-[15px]" viewBox="0 0 15 15"><path d="M1 2h13v9H1z" fill="#2468d0" stroke="#183c80" /><path d="M2 3h11L4 10H2z" fill="#5c9cf0" /><path d="M5 13h9" stroke="#234" stroke-width="2" /></svg></button>
    </div>
  </div>

  <script>
    // flow vectors: [tail x, tail y, tip x, tip y, head length]
    const arrows = [
      // upper slope
      [52,336,56,338,3],[69,341,73,342,3],[100,355,114,359,5],[117,358,128,360,4],[156,355,160,357,3],[188,372,201,374,5],[209,371,216,372,3],
      [21,353,77,360,18],[69,364,99,372,11],[84,370,114,378,9],[50,370,86,378,11],[124,375,150,380,9],[149,376,167,380,9],[219,385,238,389,9],[238,383,248,385,4],
      [90,387,119,395,9],[118,390,141,397,9],[157,390,184,395,9],[178,389,205,394,9],[247,400,269,405,8],[265,399,285,404,8],[215,405,239,409,9],[233,413,259,418,9],[270,413,298,421,9],[293,411,320,420,9],
      [11,371,53,405,17],[22,387,50,402,12],[44,386,75,402,11],[53,405,81,416,11],[74,404,112,415,10],[118,408,146,415,10],[151,408,178,414,9],[184,406,209,412,9],
      [17,405,45,423,11],[78,414,94,422,9],[45,421,60,432,10],[100,417,127,426,10],[134,416,160,423,9],[167,418,193,424,9],[200,415,226,419,9],
      [2,389,9,405,12],[2,418,5,425,5],[2,413,23,434,10],[2,435,23,450,10],[22,445,39,460,10],[34,433,60,445,10],[55,444,74,456,10],[67,433,93,444,9],[83,444,108,453,9],
      [100,434,127,444,9],[117,444,142,452,9],[134,435,160,443,9],[150,444,175,451,9],[167,435,193,442,9],[184,443,209,449,9],[200,435,226,440,9],[217,443,242,449,9],
      [233,432,260,437,9],[267,432,292,439,9],[298,429,325,439,9],[330,430,362,439,10],[251,442,276,448,9],[283,445,310,452,10],[315,439,347,449,11],[347,444,387,457,14],[363,441,407,445,15],
      [17,470,37,484,9],[50,470,72,482,9],[83,470,106,480,9],[116,470,140,477,9],[150,470,174,477,9],[183,470,207,475,9],[216,470,242,474,9],[249,470,276,474,9],[283,471,311,474,10],[316,470,346,474,10],[349,470,387,472,13],[387,469,425,454,14],
      [480,474,491,465,6],[513,475,526,470,6],[548,476,562,475,6],[580,478,597,477,6],
      [614,479,630,480,6],[648,481,664,482,6],[681,483,697,484,6],[715,485,730,486,6],[748,487,764,487,6],[780,488,797,489,6],[815,490,830,491,6],[850,491,865,491,6],[880,492,898,493,6],[913,493,921,494,0],
      // row 502
      [17,502,36,514,9],[50,502,71,514,9],[83,502,106,512,9],[116,502,139,510,9],[150,502,173,510,9],[183,503,207,508,9],[216,502,241,507,9],[249,502,275,506,9],[282,503,310,505,9],
      [316,504,345,504,10],[349,504,381,500,11],[382,503,411,494,10],[416,503,439,492,10],[447,506,464,494,7],[480,506,495,499,6],[513,508,527,503,5],[546,509,561,507,5],[579,511,595,510,5],
      [613,513,630,512,6],[647,514,663,514,6],[680,516,696,517,6],[712,519,729,519,6],[745,521,762,521,6],[778,523,796,523,7],[812,524,829,525,6],[845,525,863,526,6],[878,527,896,527,7],[912,527,921,527,0],
      // row 536
      [17,536,36,546,9],[50,536,71,545,9],[83,536,105,543,8],[116,536,139,542,9],[150,536,173,541,8],[183,536,207,541,8],[216,536,240,540,9],[249,536,275,539,9],[282,537,308,538,9],
      [316,536,342,537,9],[349,537,376,534,9],[382,537,407,531,9],[414,537,436,530,8],[446,538,466,532,7],[479,540,496,533,6],[513,541,529,537,6],[546,542,562,539,6],[579,543,595,542,6],
      [612,545,628,544,6],[646,547,662,547,6],[679,548,695,549,6],[711,551,728,552,6],[744,555,762,555,7],[777,558,794,559,7],[811,559,828,560,7],[845,560,861,560,6],[877,561,896,561,7],[911,561,921,561,0],
      // row 569
      [17,569,35,577,8],[50,569,70,577,8],[83,569,103,576,7],[116,569,138,575,8],[150,569,172,574,8],[183,570,206,573,8],[216,570,240,573,8],[249,570,274,571,8],[282,570,307,570,8],
      [316,570,340,569,8],[348,570,373,568,9],[381,570,404,567,8],[414,570,435,565,7],[446,571,466,566,7],[479,572,497,569,6],[512,574,529,570,6],[545,575,562,573,6],[579,576,595,574,6],
      [611,577,628,577,6],[645,578,662,577,6],[678,581,695,581,6],[711,583,728,584,7],[742,590,759,590,7],[775,594,791,594,6],[810,595,828,595,7],[844,594,861,594,7],[877,595,896,595,8],[911,595,921,595,0],
      // row 603
      [17,603,34,608,7],[50,603,69,608,7],[83,603,103,607,7],[116,603,137,606,7],[150,603,171,606,7],[183,603,206,606,8],[216,603,239,605,8],[249,604,272,604,7],[282,603,307,603,8],
      [316,603,340,603,8],[349,603,372,602,8],[382,603,404,600,8],[414,604,435,600,7],[446,604,466,601,7],[479,605,498,602,7],[512,606,530,603,6],[546,607,563,605,6],[579,607,596,607,6],
      [611,609,628,608,6],[645,609,662,609,6],[678,611,695,611,7],[710,613,727,613,7],[735,613,752,613,7],
      // row 636
      [17,636,34,641,7],[50,636,68,640,6],[83,636,102,639,6],[116,636,136,639,7],[150,636,171,638,7],[183,636,204,638,7],[216,636,238,638,7],[249,637,272,637,7],[282,637,306,636,8],
      [316,636,339,636,8],[349,636,372,636,8],[382,636,403,634,7],[414,637,435,634,7],[448,637,467,635,7],[479,638,499,636,7],[513,637,531,636,6],[546,638,564,637,6],[580,639,597,638,6],
      [612,639,629,639,7],[646,640,663,640,7],[679,641,696,641,7],[711,642,728,642,7],[742,637,759,637,7],[775,630,793,630,7],[810,629,828,629,8],[844,629,862,629,8],[877,629,896,629,8],[911,630,921,630,0]
    ];
    const seepage = [[200,354],[239,373],[280,393],[320,414],[359,434],[399,453],[443,456],[486,457],[528,459],[571,461],[614,463],[657,465],[700,467],[744,469],[786,471],[829,472],[872,474],[915,476]];

    const svgNS = 'http://www.w3.org/2000/svg';
    function addPath(parent, d) {
      const path = document.createElementNS(svgNS, 'path');
      path.setAttribute('d', d);
      parent.appendChild(path);
      return path;
    }

    const arrowGroup = document.getElementById('arrows');
    arrows.forEach(([x1, y1, x2, y2, head]) => {
      addPath(arrowGroup, `M${x1} ${y1}L${x2} ${y2}`).setAttribute('stroke-width', '0.9');
      if (!head) return;
      const angle = Math.atan2(y2 - y1, x2 - x1);
      const bx = x2 - head * Math.cos(angle);
      const by = y2 - head * Math.sin(angle);
      const w = head * 0.28;
      const dx = w * Math.sin(angle);
      const dy = w * Math.cos(angle);
      addPath(arrowGroup, `M${x2} ${y2}L${bx + dx} ${by - dy}L${bx - dx} ${by + dy}z`).setAttribute('stroke-width', '0.3');
    });

    const seepageGroup = document.getElementById('seepage');
    seepage.forEach(([x, y]) => addPath(seepageGroup, `M${x - 4.5} ${y + 4}h9l-4.500 -8z`));
  </script>
</body>
</html>
